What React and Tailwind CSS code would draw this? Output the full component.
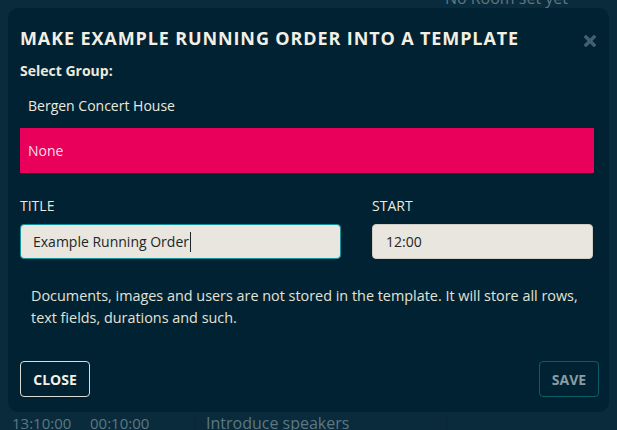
import { useState } from "react"

const font = { fontFamily: '"Open Sans", "Noto Sans", sans-serif' }

function CloseIcon() {
  return (
    <svg viewBox="0 0 12 12" className="w-[12px] h-[12px]">
      <path d="M2 2l8 8M10 2l-8 8" stroke="#42606d" strokeWidth="3.4" strokeLinecap="square" />
    </svg>
  )
}

function Backdrop() {
  return (
    <div className="h-[430px] bg-[#0a2b3b] flex flex-col justify-between text-[#5c7884]">
      <div className="-mt-[12px] flex justify-end pr-[49px] text-[16px] leading-5">No Room set yet</div>
      <div className="flex items-start h-[17px] text-[15px] leading-5">
        <div className="w-[70px] pl-[12px] border-r border-[#082636]">13:10:00</div>
        <div className="w-[125px] pl-[20px] border-r border-[#082636]">00:10:00</div>
        <div className="w-[252px] pl-[11px] text-[16px] border-r border-[#082636]">Introduce speakers</div>
      </div>
    </div>
  )
}

export default function App() {
  const [selected] = useState("None")
  const groups = ["Bergen Concert House", "None"]

  return (
    <div className="relative w-full h-[430px] overflow-hidden" style={font}>
      <Backdrop />

      {/* modal */}
      <div className="absolute inset-0 p-2">
        <div className="h-[404px] rounded-[10px] bg-[#012233] pt-[18px] pl-3 pr-[15px] flex flex-col text-[#ece9de]">
          <div className="flex items-start justify-between">
            <h2 className="text-[18px] leading-6 font-bold tracking-[0.88px] text-[#f3efe3]">
              MAKE EXAMPLE RUNNING ORDER INTO A TEMPLATE
            </h2>
            <button className="mt-[9px] -mr-[2px]">
              <CloseIcon />
            </button>
          </div>

          <div className="mt-[11px] text-[14px] leading-5 font-bold">Select Group:</div>
          <div className="mt-[2px] flex flex-col">
            {groups.map((g) => (
              <div
                key={g}
                className={
                  g === selected
                    ? "h-[45px] flex items-center px-2 text-[14px] bg-[#e8005a] text-[#f7dfe8]"
                    : "h-[45px] flex items-center px-2 text-[14px]"
                }
              >
                {g}
              </div>
            ))}
          </div>

          <div className="mt-[23px] flex gap-[31px]">
            <div className="w-[321px]">
              <div className="text-[14px] leading-5">TITLE</div>
              <div className="mt-2 h-[35px] rounded-[4px] border border-[#12909c] bg-[#e8e6de] px-3 flex items-center text-[14px] text-[#1d2628]">
                Example Running Order
                <span className="w-px h-[20px] bg-[#1d2628] ml-px" />
              </div>
            </div>
            <div className="w-[221px]">
              <div className="text-[14px] leading-5">START</div>
              <div className="mt-2 h-[35px] rounded-[4px] border border-[#cfcdc4] bg-[#e8e6de] px-[13px] flex items-center text-[14px] text-[#1d2628]">
                12:00
              </div>
            </div>
          </div>

          <p className="mt-[26px] pl-[11px] pr-[8px] text-[14.4px] leading-[21.5px] text-[#e4e2d6]">
            Documents, images and users are not stored in the template. It will store all rows, text fields, durations and such.
          </p>

          <div className="mt-auto mb-[15px] flex justify-between -mr-[5px]">
            <button className="w-[70px] h-[36px] rounded-[4px] border border-[#dedcd3] text-[14px] font-bold text-[#f3efe3]">
              CLOSE
            </button>
            <button className="w-[60px] h-[36px] rounded-[4px] border border-[#0c5e66] text-[14px] font-bold text-[#8a9ba1]">
              SAVE
            </button>
          </div>
        </div>
      </div>
    </div>
  )
}
